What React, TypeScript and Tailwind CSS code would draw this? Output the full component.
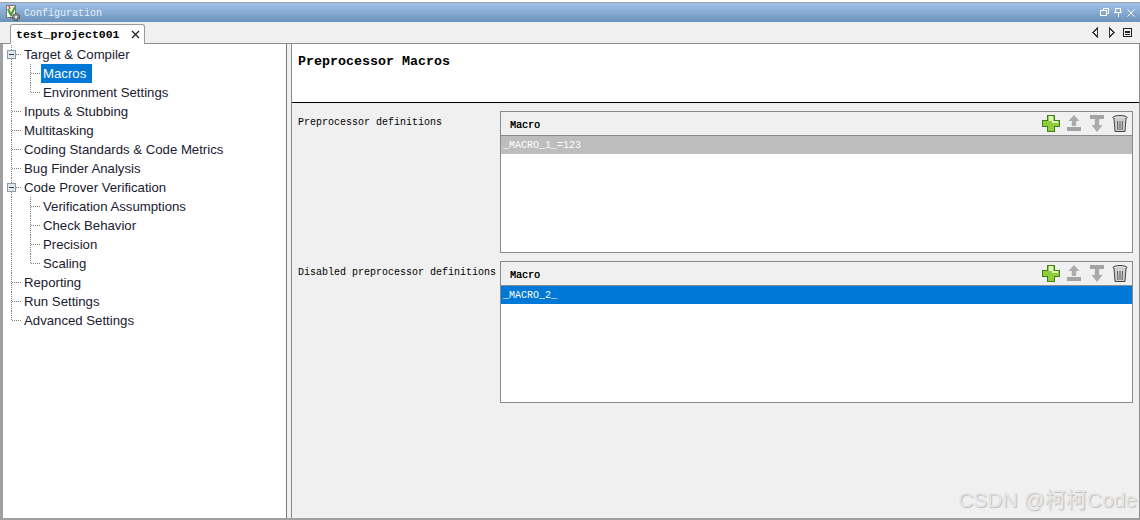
import React from "react";

type Row = { label: string; guide: "rootOpen" | "root" | "rootLast" | "child" | "childLast"; selected?: boolean };

const rows: Row[] = [
  { label: "Target & Compiler", guide: "rootOpen" },
  { label: "Macros", guide: "child", selected: true },
  { label: "Environment Settings", guide: "childLast" },
  { label: "Inputs & Stubbing", guide: "root" },
  { label: "Multitasking", guide: "root" },
  { label: "Coding Standards & Code Metrics", guide: "root" },
  { label: "Bug Finder Analysis", guide: "root" },
  { label: "Code Prover Verification", guide: "rootOpen" },
  { label: "Verification Assumptions", guide: "child" },
  { label: "Check Behavior", guide: "child" },
  { label: "Precision", guide: "child" },
  { label: "Scaling", guide: "childLast" },
  { label: "Reporting", guide: "root" },
  { label: "Run Settings", guide: "root" },
  { label: "Advanced Settings", guide: "rootLast" },
];

function Guide({ kind }: { kind: Row["guide"] }) {
  const isChild = kind === "child" || kind === "childLast";
  const dot = { stroke: "#7f7f7f", strokeWidth: 1, strokeDasharray: "1 1", shapeRendering: "crispEdges" as const };
  return (
    <svg width={isChild ? 38 : 19} height={19} className="shrink-0">
      <line x1={8.5} y1={0} x2={8.5} y2={kind === "rootLast" ? 10 : 19} {...dot} />
      {!isChild && <line x1={8.5} y1={9.5} x2={19} y2={9.5} {...dot} />}
      {kind === "rootOpen" && (
        <g shapeRendering="crispEdges">
          <rect x={4.5} y={5.5} width={8} height={8} fill="#e6e6e6" stroke="#8a9aa8" />
          <line x1={6} y1={9.5} x2={11} y2={9.5} stroke="#2a3f6a" />
        </g>
      )}
      {isChild && (
        <>
          <line x1={27.5} y1={0} x2={27.5} y2={kind === "childLast" ? 10 : 19} {...dot} />
          <line x1={28} y1={9.5} x2={38} y2={9.5} {...dot} />
        </>
      )}
    </svg>
  );
}

function ToolIcons() {
  return (
    <div className="flex items-center gap-[3px] pr-[2px] pb-[2px]">
      <svg width={20} height={20} viewBox="0 0 20 20" shapeRendering="crispEdges">
        <path d="M6.500 2.500h7v5h5v6h-5v5h-7v-5h-5v-6h5z" fill="#8fce3a" stroke="#3f7f1a" />
        <path d="M8 3h4v5h5v2h-6V8H8z" fill="#e2f2bc" />
      </svg>
      <svg width={20} height={20} viewBox="0 0 20 20">
        <path d="M10 2l5.500 6H12.200v5H7.800V8H4.500z" fill="#ababab" />
        <rect x={3} y={14} width={14} height={4} fill="#a4a4a4" />
      </svg>
      <svg width={20} height={20} viewBox="0 0 20 20">
        <rect x={3} y={2} width={14} height={4} fill="#a4a4a4" />
        <path d="M7.800 6h4.400v6h3.300L10 19l-5.500-7h3.300z" fill="#ababab" />
      </svg>
      <svg width={20} height={20} viewBox="0 0 20 20">
        <ellipse cx={10} cy={4.500} rx={7} ry={2} fill="#d8d8d8" stroke="#444" />
        <path d="M4 5l1 13.500h10l1-13.500" fill="#cfcfcf" stroke="#444" />
        <path d="M7.500 8l.4 9M10 8v9M12.500 8l-.4 9" stroke="#555" fill="none" />
      </svg>
    </div>
  );
}

function MacroTable({ value, rowClass }: { value: string; rowClass: string }) {
  return (
    <div className="flex-1 h-[142px] border border-[#858b90] bg-white flex flex-col">
      <div className="h-[24px] bg-[#f0f0f0] border-b border-[#858b90] flex items-center justify-between pl-[9px]">
        <span className="font-['Liberation_Mono',monospace] text-[10px] pt-[3px] text-black [text-shadow:0.2px_0_0_#000]">Macro</span>
        <ToolIcons />
      </div>
      <div className={`h-[18px] flex items-center pl-[2px] pt-px font-['Liberation_Mono',monospace] text-[10px] text-white ${rowClass}`}>
        {value}
      </div>
    </div>
  );
}

export default function App() {
  return (
    <div className="w-[1140px] h-[520px] relative overflow-hidden bg-[#f0f0f0] flex flex-col font-['Liberation_Sans',sans-serif]">
      <div className="h-[3px] bg-white border-b border-[#a0a0a0] shrink-0" />
      <div className="h-[19px] shrink-0 bg-gradient-to-b from-[#a0c2ea] to-[#6b93b9] flex items-center justify-between pl-[6px] pr-[5px]">
        <div className="flex items-center gap-[4px]">
          <svg width={14} height={16} viewBox="0 0 14 16">
            <rect x={0.5} y={0.5} width={9} height={12} fill="#f4f4f4" stroke="#777" />
            <path d="M2 4l3 6 4-8" stroke="#4a9a30" strokeWidth={2} fill="none" />
            <path d="M3 1l1 3" stroke="#d0503a" strokeWidth={1.500} />
            <circle cx={10} cy={12} r={3.500} fill="#888" stroke="#333" strokeDasharray="2 1" />
            <circle cx={10} cy={12} r={1.200} fill="#eee" />
          </svg>
          <span className="font-['Liberation_Mono',monospace] text-[10px] pt-[2px] text-[#e8f0f8]">Configuration</span>
        </div>
        <div className="flex items-center gap-[5px]">
          <svg width={9} height={9} viewBox="0 0 9 9" fill="none" stroke="#fff" shapeRendering="crispEdges">
            <rect x={0.5} y={2.500} width={6} height={5} />
            <path d="M3 2V0.500h5.500v4.500H7" />
          </svg>
          <svg width={8} height={9} viewBox="0 0 8 9" fill="none" stroke="#fff" shapeRendering="crispEdges">
            <path d="M1.500 0.500h5v4h-5zM0 4.500h8M4 5v4" />
          </svg>
          <svg width={8} height={8} viewBox="0 0 8 8" fill="none" stroke="#fff">
            <path d="M0.500 0.500l7 7M7.500 0.500l-7 7" />
          </svg>
        </div>
      </div>

      <div className="h-[22px] shrink-0 flex items-end justify-between pl-[10px] pr-[8px] border-b border-[#8c8c8c]">
        <div className="h-[20px] w-[135px] -mb-px bg-white border border-[#9a9a9a] border-b-0 rounded-t-[3px] flex items-center justify-between pl-[5px] pr-[4px]">
          <span className="font-['Liberation_Mono',monospace] text-[11.5px] font-bold text-black">test_project001</span>
          <svg width={9} height={9} viewBox="0 0 9 9" stroke="#222" strokeWidth={1.3}>
            <path d="M1 1l7 7M8 1l-7 7" />
          </svg>
        </div>
        <div className="flex items-center gap-[7px] h-[21px]">
          <svg width={9} height={11} viewBox="0 0 9 11" fill="none" stroke="#333" shapeRendering="crispEdges">
            <path d="M6.500 1v9L2 5.500z" />
          </svg>
          <svg width={9} height={11} viewBox="0 0 9 11" fill="none" stroke="#333" shapeRendering="crispEdges">
            <path d="M2.500 1v9L7 5.500z" />
          </svg>
          <svg width={9} height={9} viewBox="0 0 9 9" fill="none" stroke="#222" shapeRendering="crispEdges">
            <rect x={0.5} y={0.5} width={8} height={8} />
            <path d="M2 3h5M2 4.500h5M2 6h5" />
          </svg>
        </div>
      </div>

      <div className="flex-1 flex min-h-0 border-b-2 border-[#a0a0a0]">
        <div className="w-[3px] shrink-0 bg-[#a0a0a0]" />
        <div className="w-[284px] shrink-0 bg-white border-r border-[#7a7a7a] pt-px">
          {rows.map((r) => (
            <div key={r.label} className="h-[19px] flex items-center">
              <Guide kind={r.guide} />
              <span
                className={`h-[19px] leading-[19px] text-[13.2px] pl-[2px] ${r.selected ? "bg-[#0078d7] text-white pr-[6px]" : "text-[#1a2030]"}`}
              >
                {r.label}
              </span>
            </div>
          ))}
        </div>

        <div className="ml-[4px] flex-1 border-l border-r border-[#8c8c8c] flex flex-col min-w-0">
          <div className="h-[59px] shrink-0 bg-white border-b border-black pl-[6px] pt-[4px]">
            <span className="font-['Liberation_Mono',monospace] text-[13.33px] font-bold text-black">Preprocessor Macros</span>
          </div>
          <div className="flex-1 pt-[8px] pl-[6px] pr-[6px] flex flex-col gap-[8px]">
            <div className="flex">
              <div className="w-[202px] shrink-0 font-['Liberation_Mono',monospace] text-[10px] text-black pt-[4px]">
                Preprocessor definitions
              </div>
              <MacroTable value="_MACRO_1_=123" rowClass="bg-[#bdbdbd]" />
            </div>
            <div className="flex">
              <div className="w-[202px] shrink-0 font-['Liberation_Mono',monospace] text-[10px] text-black pt-[4px]">
                Disabled preprocessor definitions
              </div>
              <MacroTable value="_MACRO_2_" rowClass="bg-[#0078d7]" />
            </div>
          </div>
        </div>
      </div>

      <span className="absolute right-[3px] bottom-[5px] text-[21px] text-[#e6e6e6] [text-shadow:1px_1px_1px_#bcbcbc] font-['Liberation_Sans','Noto_Sans_CJK_SC',sans-serif]">
        CSDN @柯柯Code
      </span>
    </div>
  );
}
